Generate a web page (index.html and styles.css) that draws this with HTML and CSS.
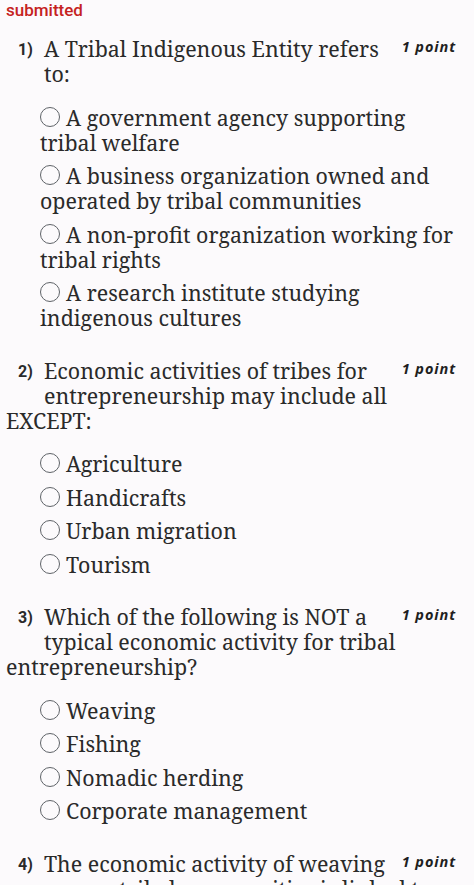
FILE: index.html
```html
<!DOCTYPE html>
<html lang="en">
<head>
<meta charset="utf-8">
<title>Quiz</title>
<link rel="stylesheet" href="styles.css">
</head>
<body>
<main class="form">
  <p class="status">submitted</p>

  <section class="question">
    <div class="q-head">
      <span class="q-num">1)</span>
      <span class="q-points">1 point</span>
      A Tribal Indigenous Entity refers to:
    </div>
    <ul class="options">
      <li><span class="radio"></span>A government agency supporting tribal welfare</li>
      <li><span class="radio"></span>A business organization owned and operated by tribal communities</li>
      <li><span class="radio"></span>A non-profit organization working for tribal rights</li>
      <li><span class="radio"></span>A research institute studying indigenous cultures</li>
    </ul>
  </section>

  <section class="question">
    <div class="q-head">
      <span class="q-num">2)</span>
      <span class="q-points">1 point</span>
      Economic activities of tribes for entrepreneurship may include all EXCEPT:
    </div>
    <ul class="options">
      <li><span class="radio"></span>Agriculture</li>
      <li><span class="radio"></span>Handicrafts</li>
      <li><span class="radio"></span>Urban migration</li>
      <li><span class="radio"></span>Tourism</li>
    </ul>
  </section>

  <section class="question">
    <div class="q-head">
      <span class="q-num">3)</span>
      <span class="q-points">1 point</span>
      Which of the following is NOT a typical economic activity for tribal entrepreneurship?
    </div>
    <ul class="options">
      <li><span class="radio"></span>Weaving</li>
      <li><span class="radio"></span>Fishing</li>
      <li><span class="radio"></span>Nomadic herding</li>
      <li><span class="radio"></span>Corporate management</li>
    </ul>
  </section>

  <section class="question">
    <div class="q-head">
      <span class="q-num">4)</span>
      <span class="q-points">1 point</span>
      The economic activity of weaving among tribal communities is linked to:
    </div>
  </section>
</main>
</body>
</html>
```

FILE: styles.css
```css
html, body {
  margin: 0;
  padding: 0;
  background: #fcfafc;
}

body {
  color: #2a2a2a;
  font-family: "Noto Serif", "DejaVu Serif", serif;
  overflow: hidden;
  height: 885px;
}

.form {
  padding: 0 18px 0 6px;
}

.status {
  margin: 0;
  padding: 0;
  font-family: Roboto, "Liberation Sans", sans-serif;
  font-size: 17px;
  font-weight: 500;
  line-height: 20px;
  color: #c5221f;
}

.question {
  margin-top: 16px;
}

.question + .question {
  margin-top: 27.5px;
}

.q-head {
  display: flow-root;
  font-size: 21.4px;
  line-height: 25px;
}

.q-num {
  float: left;
  width: 26px;
  height: 49px;
  padding: 1px 0 0 12px;
  font-family: Roboto, "Liberation Sans", sans-serif;
  font-size: 16px;
  font-weight: 700;
  line-height: 25px;
  color: #2a2a2a;
}

.q-points {
  float: right;
  margin-left: 10px;
  font-family: "Open Sans", Roboto, sans-serif;
  font-size: 14.5px;
  font-weight: 700;
  font-style: italic;
  letter-spacing: 0.9px;
  line-height: 22px;
  color: #1f1f1f;
}

.options {
  list-style: none;
  margin: 18.5px 0 0 0;
  padding: 0 0 0 34px;
  display: flex;
  flex-direction: column;
  gap: 8.5px;
  font-size: 21.4px;
  line-height: 25px;
}

.radio {
  display: inline-block;
  box-sizing: border-box;
  width: 20px;
  height: 20px;
  margin-right: 6px;
  border: 1.5px solid #5f6368;
  border-radius: 50%;
  vertical-align: -1px;
}
```
